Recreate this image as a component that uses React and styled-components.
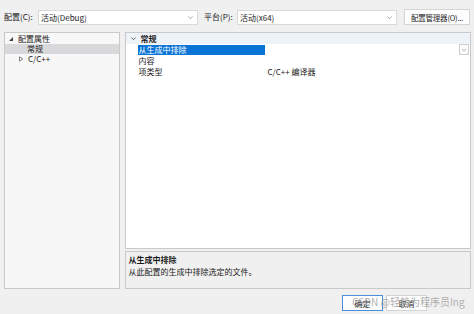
import React from 'react';
import styled, { createGlobalStyle } from 'styled-components';

const GlobalStyle = createGlobalStyle`
  html, body {
    margin: 0;
    padding: 0;
    background: #f0f0f0;
  }
  body {
    font-family: "Noto Sans CJK SC", "Noto Sans", sans-serif;
    font-size: 8px;
    color: #1a1a1a;
  }
`;

const Dialog = styled.div`
  position: relative;
  width: 474px;
  height: 314px;
  box-sizing: border-box;
  padding: 9px 3px 0 4px;
  display: flex;
  flex-direction: column;
  background: #f0f0f0;
`;

const TopBar = styled.div`
  display: flex;
  align-items: center;
  height: 16px;
`;

const Label = styled.span`
  width: ${p => p.$w}px;
  line-height: 16px;
  white-space: nowrap;
`;

const Combo = styled.div`
  width: ${p => p.$w}px;
  height: 15px;
  box-sizing: border-box;
  border: 1px solid #d9d9d9;
  background: #fff;
  display: flex;
  align-items: center;
  justify-content: space-between;
  padding: 0 3px 0 2px;
  margin-right: ${p => p.$mr || 0}px;
`;

const Chevron = ({ size = 7, color = '#8a8a8a' }) => (
  <svg width={size} height={size} viewBox="0 0 8 8">
    <path d="M1.5 2.8 L4 5.3 L6.5 2.8" fill="none" stroke={color} strokeWidth="0.9" />
  </svg>
);

const Button = styled.div`
  width: ${p => p.$w}px;
  height: 16px;
  box-sizing: border-box;
  border: 1px solid ${p => (p.$primary ? '#4a8fd8' : '#d4d4d4')};
  background: #fdfdfd;
  display: flex;
  align-items: center;
  justify-content: center;
  white-space: nowrap;
  font-size: ${p => p.$fs || 8}px;
  letter-spacing: ${p => (p.$tight ? '-0.2px' : 'normal')};
  margin-left: ${p => p.$ml || 0}px;
`;

const Main = styled.div`
  display: flex;
  margin-top: 7px;
  gap: 5px;
  height: 257px;
`;

const Tree = styled.div`
  width: 116px;
  box-sizing: border-box;
  border: 1px solid #c9c9c9;
  background: #f7f7f7;
  padding-top: 1px;
`;

const TreeRow = styled.div`
  height: 10px;
  line-height: 10px;
  display: flex;
  align-items: center;
  padding-left: ${p => p.$indent}px;
  background: ${p => (p.$selected ? '#d9d9dc' : 'transparent')};
  gap: 4px;
`;

const RightCol = styled.div`
  width: 348px;
  display: flex;
  flex-direction: column;
  gap: 2px;
`;

const Grid = styled.div`
  height: 218px;
  box-sizing: border-box;
  border: 1px solid #c9c9c9;
  background: #fff;
`;

const GroupRow = styled.div`
  height: 11px;
  display: flex;
  align-items: center;
  padding-left: 4px;
  background: #eef2f9;
  gap: 4px;
  font-weight: bold;
`;

const PropRow = styled.div`
  height: 11px;
  display: flex;
  align-items: center;
  padding-left: 12px;
`;

const NameCell = styled.div`
  width: 127px;
  height: 10px;
  line-height: 10px;
  padding-left: 1px;
  box-sizing: border-box;
  background: ${p => (p.$selected ? '#0a74d6' : 'transparent')};
  color: ${p => (p.$selected ? '#fff' : '#1a1a1a')};
`;

const ValueCell = styled.div`
  flex: 1;
  display: flex;
  align-items: center;
  justify-content: space-between;
  padding-left: 3px;
  padding-right: 1px;
`;

const DropBtn = styled.div`
  width: 10px;
  height: 11px;
  box-sizing: border-box;
  border: 1px solid #cfcfcf;
  background: #fbfbfb;
  display: flex;
  align-items: center;
  justify-content: center;
`;

const Description = styled.div`
  height: 38px;
  box-sizing: border-box;
  border: 1px solid #c9c9c9;
  background: #f0f0f0;
  padding: 2px 3px;
  line-height: 12px;
`;

const DescTitle = styled.div`
  font-weight: bold;
`;

const Footer = styled.div`
  display: flex;
  justify-content: flex-end;
  margin-top: 6px;
  padding-right: 44px;
`;

const Watermark = styled.div`
  position: absolute;
  left: 352px;
  top: 296px;
  font-size: 10px;
  line-height: 12px;
  color: rgba(150, 150, 150, 0.75);
  white-space: nowrap;
  pointer-events: none;
`;

const Triangle = ({ open }) => (
  <svg width="6" height="6" viewBox="0 0 6 6">
    {open ? (
      <path d="M5 1 L5 5 L1 5 Z" fill="#444" />
    ) : (
      <path d="M1.5 0.8 L4.8 3 L1.5 5.2 Z" fill="none" stroke="#666" strokeWidth="0.8" />
    )}
  </svg>
);

export default function App() {
  return (
    <>
      <GlobalStyle />
      <Dialog>
        <TopBar>
          <Label $w={34}>配置(C):</Label>
          <Combo $w={160} $mr={6}>
            <span>活动(Debug)</span>
            <Chevron />
          </Combo>
          <Label $w={33}>平台(P):</Label>
          <Combo $w={160} $mr={7}>
            <span>活动(x64)</span>
            <Chevron />
          </Combo>
          <Button $w={66} $fs={7.5} $tight>配置管理器(O)...</Button>
        </TopBar>

        <Main>
          <Tree>
            <TreeRow $indent={3}>
              <Triangle open />
              <span>配置属性</span>
            </TreeRow>
            <TreeRow $indent={22} $selected>
              <span>常规</span>
            </TreeRow>
            <TreeRow $indent={13}>
              <Triangle />
              <span>C/C++</span>
            </TreeRow>
          </Tree>

          <RightCol>
            <Grid>
              <GroupRow>
                <Chevron size={7} color="#444" />
                <span>常规</span>
              </GroupRow>
              <PropRow>
                <NameCell $selected>从生成中排除</NameCell>
                <ValueCell>
                  <span />
                  <DropBtn>
                    <Chevron size={6} />
                  </DropBtn>
                </ValueCell>
              </PropRow>
              <PropRow>
                <NameCell>内容</NameCell>
                <ValueCell />
              </PropRow>
              <PropRow>
                <NameCell>项类型</NameCell>
                <ValueCell>C/C++ 编译器</ValueCell>
              </PropRow>
            </Grid>
            <Description>
              <DescTitle>从生成中排除</DescTitle>
              <div>从此配置的生成中排除选定的文件。</div>
            </Description>
          </RightCol>
        </Main>

        <Footer>
          <Button $w={41} $primary>确定</Button>
          <Button $w={41} $ml={3}>取消</Button>
        </Footer>
        <Watermark>CSDN @轻静为程序员Ing</Watermark>
      </Dialog>
    </>
  );
}
